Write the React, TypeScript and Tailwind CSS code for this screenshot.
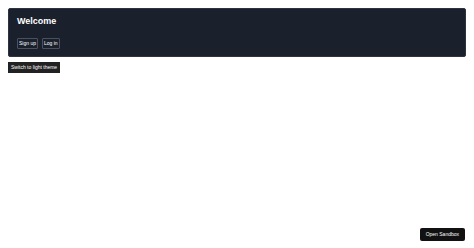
export default function App() {
  return (
    <div className="relative h-[248px] w-[474px] bg-white font-['Liberation_Sans',Arial,sans-serif]">
      <div className="flex flex-col items-start px-2 pt-2">
        <div className="w-full rounded-[2px] border border-[#2d3340] bg-[#1a202c] px-2 pb-[7px] pt-[7px]">
          <h1 className="text-[9px] font-bold leading-[10px] text-white">Welcome</h1>
          <div className="mt-[12px] flex gap-[4px]">
            <button className="rounded-[1px] border border-[#4a5060] bg-[#1a202c] px-[1px] py-0 text-[5px] leading-[9px] text-white">
              Sign up
            </button>
            <button className="rounded-[1px] border border-[#4a5060] bg-[#1a202c] px-[1px] py-0 text-[5px] leading-[9px] text-white">
              Log in
            </button>
          </div>
        </div>
        <button className="mt-[5px] block bg-[#222] px-[3px] py-[1px] text-[5px] leading-[9px] text-white">
          Switch to light theme
        </button>
      </div>
      <button className="absolute bottom-[7px] right-[9px] rounded-[2px] bg-[#111] px-[6px] py-[3px] text-[5px] leading-[7px] text-white">
        Open Sandbox
      </button>
    </div>
  );
}
